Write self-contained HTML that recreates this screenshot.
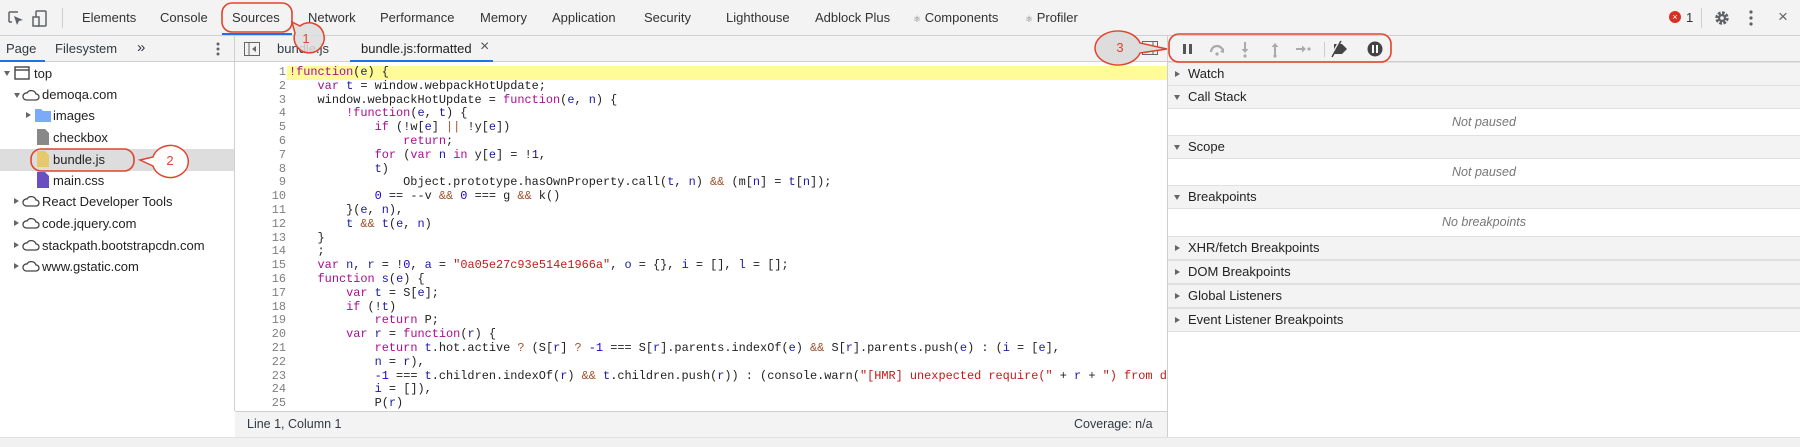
<!DOCTYPE html>
<html><head><meta charset="utf-8"><style>
*{box-sizing:border-box;margin:0;padding:0}
body{width:1800px;height:447px;overflow:hidden;background:#fff;font-family:"Liberation Sans",sans-serif;font-size:13px;color:#303942;position:relative}
.a{position:absolute;white-space:nowrap}
#top{position:absolute;left:0;top:0;width:1800px;height:36px;background:#f3f3f3;border-bottom:1px solid #cfcfcf}
#row2{position:absolute;left:0;top:36px;width:1800px;height:26px;background:#f3f3f3;border-bottom:1px solid #cfcfcf}
.tab{top:10px;color:#333}
.vl{position:absolute;width:1px;background:#cfcfcf}
.tree{font-size:13px;color:#222}
#code{position:absolute;left:235px;top:62px;width:932px;height:349px;overflow:hidden;font-family:"Liberation Mono",monospace;font-size:11.9px}
.ln{position:absolute;left:0;width:51px;text-align:right;color:#808080;height:13.8px;line-height:13.8px}
.cl{position:absolute;left:54px;height:13.8px;line-height:13.8px;white-space:pre;color:#222}
.k{color:#aa0d91}.v{color:#1a1aa6}.n{color:#1c00cf}.s{color:#c41a16}.o{color:#a0522d}
.hd{position:absolute;left:1168px;width:632px;height:24px;background:#f3f3f3;border-bottom:1px solid #e0e0e0;border-top:1px solid #e0e0e0;padding-left:20px;line-height:22px;font-size:13px;color:#222}
.hd:before{content:"";position:absolute;left:7px;top:8px;border-left:5px solid #666;border-top:3.5px solid transparent;border-bottom:3.5px solid transparent}
.hd.op:before{left:6px;top:9px;border-top:5px solid #666;border-left:3.5px solid transparent;border-right:3.5px solid transparent;border-bottom:0}
.bd{position:absolute;left:1168px;width:632px;height:26px;text-align:center;line-height:26px;font-style:italic;color:#777;font-size:12.5px}
.car{position:absolute;border-left:5px solid #666;border-top:3.5px solid transparent;border-bottom:3.5px solid transparent}
.cad{position:absolute;border-top:5px solid #666;border-left:3.5px solid transparent;border-right:3.5px solid transparent}
</style></head><body>
<div id="top"></div>
<div id="row2"></div>
<svg class="a" style="left:6px;top:9px" width="46" height="20" viewBox="0 0 46 20"><path d="M3 3h9M3 3v10M3 13h3" stroke="#5f6368" stroke-width="1.5" fill="none"/><path d="M8 7l9 4-4 1-2 4z" fill="#5f6368"/><rect x="30" y="2" width="10" height="15" rx="1" stroke="#5f6368" stroke-width="1.5" fill="none"/><rect x="27" y="8" width="6" height="9" fill="#f3f3f3" stroke="#5f6368" stroke-width="1.5"/></svg>
<div class="vl" style="left:62px;top:8px;height:20px"></div>
<div class="a tab" style="left:82px">Elements</div>
<div class="a tab" style="left:160px">Console</div>
<div class="a tab" style="left:232px">Sources</div>
<div class="a" style="left:222px;top:33px;width:70px;height:2px;background:#1a73e8"></div>
<div class="a tab" style="left:308px">Network</div>
<div class="a tab" style="left:380px">Performance</div>
<div class="a tab" style="left:480px">Memory</div>
<div class="a tab" style="left:552px">Application</div>
<div class="a tab" style="left:644px">Security</div>
<div class="a tab" style="left:726px">Lighthouse</div>
<div class="a tab" style="left:815px">Adblock Plus</div>
<div class="a tab" style="left:913px"><span style="font-size:9px;color:#777">⚛</span> Components</div>
<div class="a tab" style="left:1025px"><span style="font-size:9px;color:#777">⚛</span> Profiler</div>
<div class="a" style="left:1669px;top:11px;width:12px;height:12px;border-radius:50%;background:#d93025;color:#fff;font-size:9px;line-height:12px;text-align:center">×</div>
<div class="a tab" style="left:1686px">1</div>
<div class="vl" style="left:1701px;top:8px;height:20px"></div>
<svg class="a" style="left:1714px;top:10px" width="16" height="16" viewBox="0 0 16 16"><circle cx="8" cy="8" r="5" fill="none" stroke="#5f6368" stroke-width="3.5" stroke-dasharray="2.6 1.3"/><circle cx="8" cy="8" r="4" fill="#5f6368"/><circle cx="8" cy="8" r="1.8" fill="#f3f3f3"/></svg>
<svg class="a" style="left:1748px;top:9px" width="6" height="18"><circle cx="3" cy="3" r="1.6" fill="#5f6368"/><circle cx="3" cy="9" r="1.6" fill="#5f6368"/><circle cx="3" cy="15" r="1.6" fill="#5f6368"/></svg>
<div class="a" style="left:1778px;top:7px;font-size:17px;color:#5f6368">×</div>

<div class="a" style="left:6px;top:41px">Page</div>
<div class="a" style="left:0;top:60px;width:45px;height:2px;background:#1a73e8"></div>
<div class="a" style="left:55px;top:41px">Filesystem</div>
<div class="a" style="left:137px;top:39px;font-size:15px">»</div>
<svg class="a" style="left:215px;top:41px" width="6" height="16"><circle cx="3" cy="3" r="1.5" fill="#5f6368"/><circle cx="3" cy="8" r="1.5" fill="#5f6368"/><circle cx="3" cy="13" r="1.5" fill="#5f6368"/></svg>
<div class="vl" style="left:234px;top:36px;height:375px"></div>
<svg class="a" style="left:244px;top:42px" width="16" height="14"><rect x="0.5" y="0.5" width="15" height="13" fill="none" stroke="#666"/><line x1="5" y1="0" x2="5" y2="14" stroke="#666"/><path d="M12 4v6l-4-3z" fill="#666"/></svg>
<div class="a" style="left:277px;top:41px">bundle.js</div>
<div class="a" style="left:361px;top:41px;color:#222">bundle.js:formatted</div>
<div class="a" style="left:480px;top:38px;font-size:16px;color:#555">×</div>
<div class="a" style="left:350px;top:60px;width:143px;height:2px;background:#1a73e8"></div>
<svg class="a" style="left:1142px;top:41px" width="16" height="14"><rect x="0.5" y="0.5" width="15" height="13" fill="none" stroke="#666"/><line x1="11" y1="0" x2="11" y2="14" stroke="#666"/></svg>
<div class="vl" style="left:1167px;top:36px;height:401px"></div>

<svg class="a" style="left:1178px;top:40px" width="215" height="18" viewBox="0 0 215 18">
<rect x="5" y="4" width="3" height="10" fill="#555"/><rect x="11" y="4" width="3" height="10" fill="#555"/>
<path d="M33 12a6 6 0 0 1 12 0" stroke="#aaa" stroke-width="2.2" fill="none"/><path d="M46 8l0 5-4-1z" fill="#aaa"/><circle cx="39" cy="14" r="1.6" fill="#aaa"/>
<path d="M67 2v9" stroke="#aaa" stroke-width="2"/><path d="M63.5 9l3.5 4 3.5-4z" fill="#aaa"/><circle cx="67" cy="16" r="1.6" fill="#aaa"/>
<path d="M97 6v9" stroke="#aaa" stroke-width="2"/><path d="M93.5 7l3.5-4 3.5 4z" fill="#aaa"/><circle cx="97" cy="16" r="1.6" fill="#aaa"/>
<path d="M118 9h7" stroke="#aaa" stroke-width="2"/><path d="M124 5.5l4 3.5-4 3.5z" fill="#aaa"/><circle cx="131" cy="9" r="1.6" fill="#aaa"/>
<rect x="146" y="2" width="1" height="15" fill="#ccc"/>
<path d="M156 4h8l5 5-5 5h-8z" fill="#444"/><path d="M153 17l9-16" stroke="#f3f3f3" stroke-width="2.5"/><path d="M154 17l9-16" stroke="#444" stroke-width="1.5"/>
<circle cx="197" cy="9" r="7.5" fill="#444"/><rect x="194" y="5" width="2" height="8" fill="#fff"/><rect x="198" y="5" width="2" height="8" fill="#fff"/>
</svg>

<div class="cad" style="left:4px;top:71px"></div>
<svg class="a" style="left:14px;top:66px" width="16" height="14"><rect x="1" y="1" width="14" height="12" fill="none" stroke="#444" stroke-width="1.4"/><line x1="1" y1="4" x2="15" y2="4" stroke="#444" stroke-width="1.4"/></svg>
<div class="a tree" style="left:34px;top:66px">top</div>
<div class="cad" style="left:14px;top:93px"></div>
<svg class="a" style="left:22px;top:88px" width="18" height="13"><path d="M4 12h10a3 3 0 0 0 0-6 5 5 0 0 0-9-1 3.5 3.5 0 0 0-1 7z" fill="none" stroke="#444" stroke-width="1.3"/></svg>
<div class="a tree" style="left:42px;top:87px">demoqa.com</div>
<div class="car" style="left:26px;top:112px"></div>
<svg class="a" style="left:35px;top:108px" width="16" height="14"><path d="M0 1h6l2 2h8v11H0z" fill="#7baaf7"/></svg>
<div class="a tree" style="left:53px;top:108px">images</div>
<svg class="a" style="left:37px;top:129px" width="12" height="16"><path d="M0 0h8l4 4v12H0z" fill="#888"/></svg>
<div class="a tree" style="left:53px;top:130px">checkbox</div>
<div class="a" style="left:0;top:149px;width:234px;height:22px;background:#dddddd"></div>
<svg class="a" style="left:37px;top:151px" width="12" height="16"><path d="M0 0h8l4 4v12H0z" fill="#e6c96a"/></svg>
<div class="a tree" style="left:53px;top:152px">bundle.js</div>
<svg class="a" style="left:37px;top:172px" width="12" height="16"><path d="M0 0h8l4 4v12H0z" fill="#6a4fc2"/></svg>
<div class="a tree" style="left:53px;top:173px">main.css</div>
<div class="car" style="left:14px;top:198px"></div>
<svg class="a" style="left:22px;top:194px" width="18" height="13"><path d="M4 12h10a3 3 0 0 0 0-6 5 5 0 0 0-9-1 3.5 3.5 0 0 0-1 7z" fill="none" stroke="#444" stroke-width="1.3"/></svg>
<div class="a tree" style="left:42px;top:194px">React Developer Tools</div>
<div class="car" style="left:14px;top:220px"></div>
<svg class="a" style="left:22px;top:216px" width="18" height="13"><path d="M4 12h10a3 3 0 0 0 0-6 5 5 0 0 0-9-1 3.5 3.5 0 0 0-1 7z" fill="none" stroke="#444" stroke-width="1.3"/></svg>
<div class="a tree" style="left:42px;top:216px">code.jquery.com</div>
<div class="car" style="left:14px;top:242px"></div>
<svg class="a" style="left:22px;top:238px" width="18" height="13"><path d="M4 12h10a3 3 0 0 0 0-6 5 5 0 0 0-9-1 3.5 3.5 0 0 0-1 7z" fill="none" stroke="#444" stroke-width="1.3"/></svg>
<div class="a tree" style="left:42px;top:238px">stackpath.bootstrapcdn.com</div>
<div class="car" style="left:14px;top:263px"></div>
<svg class="a" style="left:22px;top:259px" width="18" height="13"><path d="M4 12h10a3 3 0 0 0 0-6 5 5 0 0 0-9-1 3.5 3.5 0 0 0-1 7z" fill="none" stroke="#444" stroke-width="1.3"/></svg>
<div class="a tree" style="left:42px;top:259px">www.gstatic.com</div>

<div id="code">
<div class="a" style="left:52px;top:4px;width:880px;height:13.8px;background:#fffb98"></div>
<div style="position:absolute;left:0;top:4px;width:932px">
<div class="ln" style="top:0">1</div><div class="cl" style="top:0"><span class="k">!function</span>(<span class="v">e</span>) {</div>
<div class="ln" style="top:13.8px">2</div><div class="cl" style="top:13.8px">    <span class="k">var</span> <span class="v">t</span> = window.webpackHotUpdate;</div>
<div class="ln" style="top:27.6px">3</div><div class="cl" style="top:27.6px">    window.webpackHotUpdate = <span class="k">function</span>(<span class="v">e</span>, <span class="v">n</span>) {</div>
<div class="ln" style="top:41.4px">4</div><div class="cl" style="top:41.4px">        <span class="k">!function</span>(<span class="v">e</span>, <span class="v">t</span>) {</div>
<div class="ln" style="top:55.2px">5</div><div class="cl" style="top:55.2px">            <span class="k">if</span> (!w[<span class="v">e</span>] <span class="o">||</span> !y[<span class="v">e</span>])</div>
<div class="ln" style="top:69px">6</div><div class="cl" style="top:69px">                <span class="k">return</span>;</div>
<div class="ln" style="top:82.8px">7</div><div class="cl" style="top:82.8px">            <span class="k">for</span> (<span class="k">var</span> <span class="v">n</span> <span class="k">in</span> y[<span class="v">e</span>] = !<span class="n">1</span>,</div>
<div class="ln" style="top:96.6px">8</div><div class="cl" style="top:96.6px">            <span class="v">t</span>)</div>
<div class="ln" style="top:110.4px">9</div><div class="cl" style="top:110.4px">                Object.prototype.hasOwnProperty.call(<span class="v">t</span>, <span class="v">n</span>) <span class="o">&amp;&amp;</span> (m[<span class="v">n</span>] = <span class="v">t</span>[<span class="v">n</span>]);</div>
<div class="ln" style="top:124.2px">10</div><div class="cl" style="top:124.2px">            <span class="n">0</span> == --v <span class="o">&amp;&amp;</span> <span class="n">0</span> === g <span class="o">&amp;&amp;</span> k()</div>
<div class="ln" style="top:138px">11</div><div class="cl" style="top:138px">        }(<span class="v">e</span>, <span class="v">n</span>),</div>
<div class="ln" style="top:151.8px">12</div><div class="cl" style="top:151.8px">        <span class="v">t</span> <span class="o">&amp;&amp;</span> <span class="v">t</span>(<span class="v">e</span>, <span class="v">n</span>)</div>
<div class="ln" style="top:165.6px">13</div><div class="cl" style="top:165.6px">    }</div>
<div class="ln" style="top:179.4px">14</div><div class="cl" style="top:179.4px">    ;</div>
<div class="ln" style="top:193.2px">15</div><div class="cl" style="top:193.2px">    <span class="k">var</span> <span class="v">n</span>, <span class="v">r</span> = !<span class="n">0</span>, <span class="v">a</span> = <span class="s">"0a05e27c93e514e1966a"</span>, <span class="v">o</span> = {}, <span class="v">i</span> = [], <span class="v">l</span> = [];</div>
<div class="ln" style="top:207px">16</div><div class="cl" style="top:207px">    <span class="k">function</span> <span class="v">s</span>(<span class="v">e</span>) {</div>
<div class="ln" style="top:220.8px">17</div><div class="cl" style="top:220.8px">        <span class="k">var</span> <span class="v">t</span> = S[<span class="v">e</span>];</div>
<div class="ln" style="top:234.6px">18</div><div class="cl" style="top:234.6px">        <span class="k">if</span> (!<span class="v">t</span>)</div>
<div class="ln" style="top:248.4px">19</div><div class="cl" style="top:248.4px">            <span class="k">return</span> P;</div>
<div class="ln" style="top:262.2px">20</div><div class="cl" style="top:262.2px">        <span class="k">var</span> <span class="v">r</span> = <span class="k">function</span>(<span class="v">r</span>) {</div>
<div class="ln" style="top:276px">21</div><div class="cl" style="top:276px">            <span class="k">return</span> <span class="v">t</span>.hot.active <span class="o">?</span> (S[<span class="v">r</span>] <span class="o">?</span> <span class="n">-1</span> === S[<span class="v">r</span>].parents.indexOf(<span class="v">e</span>) <span class="o">&amp;&amp;</span> S[<span class="v">r</span>].parents.push(<span class="v">e</span>) : (<span class="v">i</span> = [<span class="v">e</span>],</div>
<div class="ln" style="top:289.8px">22</div><div class="cl" style="top:289.8px">            <span class="v">n</span> = <span class="v">r</span>),</div>
<div class="ln" style="top:303.6px">23</div><div class="cl" style="top:303.6px">            <span class="n">-1</span> === <span class="v">t</span>.children.indexOf(<span class="v">r</span>) <span class="o">&amp;&amp;</span> <span class="v">t</span>.children.push(<span class="v">r</span>)) : (console.warn(<span class="s">"[HMR] unexpected require("</span> + <span class="v">r</span> + <span class="s">") from disposed module "</span> + <span class="v">e</span>),</div>
<div class="ln" style="top:317.4px">24</div><div class="cl" style="top:317.4px">            <span class="v">i</span> = []),</div>
<div class="ln" style="top:331.2px">25</div><div class="cl" style="top:331.2px">            P(<span class="v">r</span>)</div>
</div>
</div>

<div class="a" style="left:235px;top:411px;width:932px;height:26px;background:#f3f3f3;border-top:1px solid #cfcfcf"></div>
<div class="a" style="left:247px;top:417px;font-size:12.5px">Line 1, Column 1</div>
<div class="a" style="left:1074px;top:417px;font-size:12.5px">Coverage: n/a</div>
<div class="a" style="left:0;top:437px;width:1800px;height:10px;background:#f1f1f1;border-top:1px solid #e0e0e0"></div>

<div class="hd" style="top:62px">Watch</div>
<div class="hd op" style="top:85px">Call Stack</div>
<div class="bd" style="top:109px">Not paused</div>
<div class="hd op" style="top:135px">Scope</div>
<div class="bd" style="top:159px">Not paused</div>
<div class="hd op" style="top:185px">Breakpoints</div>
<div class="bd" style="top:209px">No breakpoints</div>
<div class="hd" style="top:236px">XHR/fetch Breakpoints</div>
<div class="hd" style="top:260px">DOM Breakpoints</div>
<div class="hd" style="top:284px">Global Listeners</div>
<div class="hd" style="top:308px">Event Listener Breakpoints</div>

<svg class="a" style="left:0;top:0" width="1800" height="447">
<rect x="222" y="3" width="70" height="29" rx="10" fill="none" stroke="#e0442c" stroke-width="1.6"/>
<path d="M292 22 L300 26 A15 15 0 1 1 295 33 Z" fill="#ddd" fill-opacity="0.85" stroke="#e0442c" stroke-width="1.5"/>
<text x="306" y="43" font-family="Liberation Sans" font-size="13" fill="#e0442c" text-anchor="middle">1</text>
<rect x="31" y="149" width="103" height="22" rx="10" fill="none" stroke="#e0442c" stroke-width="1.6"/>
<path d="M140 160 L153 157 A18 16 0 1 1 153 166 Z" fill="#fff" stroke="#e0442c" stroke-width="1.5"/>
<text x="170" y="165" font-family="Liberation Sans" font-size="13" fill="#e0442c" text-anchor="middle">2</text>
<rect x="1169" y="34" width="222" height="28" rx="10" fill="none" stroke="#e0442c" stroke-width="1.6"/>
<path d="M1167 49 L1140 43 A23 17 0 1 0 1140 53 Z" fill="#ddd" stroke="#e0442c" stroke-width="1.5"/>
<text x="1120" y="52" font-family="Liberation Sans" font-size="13" fill="#e0442c" text-anchor="middle">3</text>
</svg>
</body></html>
